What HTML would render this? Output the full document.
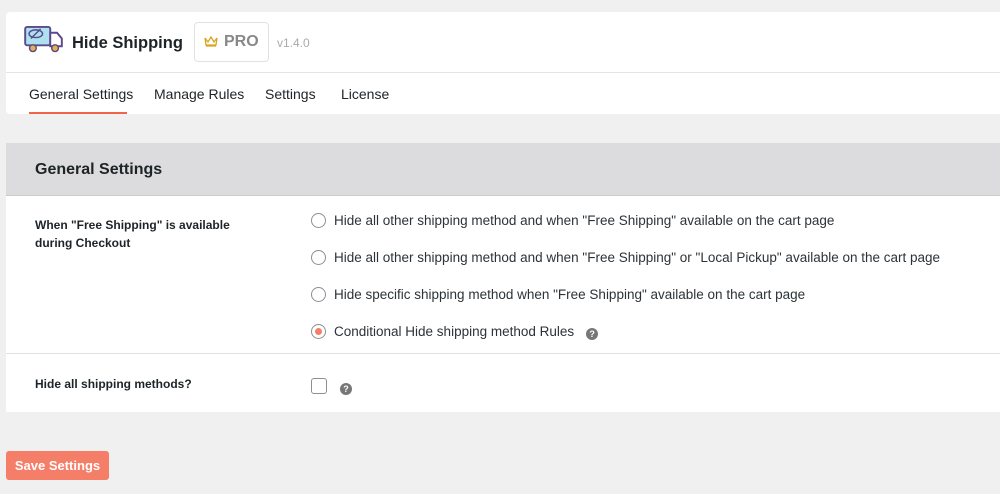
<!DOCTYPE html>
<html><head><style>
*{box-sizing:border-box;margin:0;padding:0}
body{width:1000px;height:494px;background:#f0f0f1;font-family:"Liberation Sans",sans-serif;color:#1d2327;position:relative;overflow:hidden}
.hdr{position:absolute;left:6px;top:12px;width:994px;height:102px;background:#fff;border-radius:4px 0 0 4px}
.top{height:61px;border-bottom:1px solid #e5e5e5;position:relative}
.title{position:absolute;left:66px;top:22px;font-size:16.5px;font-weight:bold;color:#1d2327}
.pro{position:absolute;left:188px;top:10px;width:75px;height:40px;border:1px solid #e2e2e2;border-radius:4px;font-size:16px;font-weight:bold;color:#888;line-height:38px;padding-left:29px}
.ver{position:absolute;left:271px;top:24px;font-size:12px;color:#aaa}
.tabs a{position:absolute;top:86px;font-size:14px;color:#1d2327;text-decoration:none}
.ul{position:absolute;left:29px;top:112px;width:98px;height:2px;background:#f0644a}
.card{position:absolute;left:6px;top:143px;width:994px;height:269px;background:#fff}
.ch{height:53px;background:#dcdcde;border-bottom:1px solid #ccc;padding:18px 29px;font-size:16px;font-weight:bold}
.lbl{position:absolute;left:35px;font-size:12px;font-weight:bold;line-height:18px}
.opt{position:absolute;left:311px;font-size:13.5px;color:#2c3338}
.r{display:inline-block;width:15px;height:15px;border:1px solid #8c8f94;border-radius:50%;vertical-align:-3px;margin-right:8px;position:relative;background:#fff}
.q{display:inline-block;width:12px;height:12px;border-radius:50%;background:#777;color:#fff;font-size:9px;font-weight:bold;text-align:center;line-height:12px;margin-left:12px;vertical-align:-1px}
.btn{position:absolute;left:6px;top:451px;width:103px;height:29px;background:#f57e68;border-radius:3px;color:#fff;font-size:13px;font-weight:bold;text-align:center;line-height:29px}
</style></head><body>
<div class="hdr">
<div class="top">
<svg style="position:absolute;left:18px;top:14px" width="39" height="27" viewBox="0 0 40 28"><rect x="1" y="1" width="26" height="19" rx="2" fill="#aee0f0" stroke="#5a4a8a" stroke-width="2"/><path d="M27 7h7l5 6v8H27z" fill="#fff" stroke="#5a4a8a" stroke-width="2"/><ellipse cx="12" cy="8" rx="7" ry="4" fill="none" stroke="#5a4a8a" stroke-width="1.5"/><line x1="7" y1="13" x2="17" y2="3" stroke="#5a4a8a" stroke-width="1.5"/><circle cx="9" cy="23" r="3.5" fill="#e8b04a" stroke="#5a4a8a" stroke-width="1.5"/><circle cx="32" cy="23" r="3.5" fill="#e8b04a" stroke="#5a4a8a" stroke-width="1.5"/></svg>
<div class="title">Hide Shipping</div>
<div class="pro"><svg style="position:absolute;left:9px;top:13px" width="14" height="11" viewBox="0 0 14 11"><path d="M1 2l3 4 3-5 3 5 3-4-1 7H2z M2 10h10" fill="none" stroke="#d9a520" stroke-width="1.3"/></svg>PRO</div>
<div class="ver">v1.4.0</div>
</div>
</div>
<div class="tabs"><a style="left:29px">General Settings</a><a style="left:154px">Manage Rules</a><a style="left:265px">Settings</a><a style="left:341px">License</a></div>
<div class="ul"></div>
<div class="card">
<div class="ch">General Settings</div>
<div style="position:absolute;left:0;top:210px;width:994px;height:1px;background:#e2e2e2"></div>
</div>
<div class="lbl" style="top:216px">When "Free Shipping" is available<br>during Checkout</div>
<div class="opt" style="top:213px"><span class="r"></span>Hide all other shipping method and when "Free Shipping" available on the cart page</div>
<div class="opt" style="top:250px"><span class="r"></span>Hide all other shipping method and when "Free Shipping" or "Local Pickup" available on the cart page</div>
<div class="opt" style="top:287px"><span class="r"></span>Hide specific shipping method when "Free Shipping" available on the cart page</div>
<div class="opt" style="top:324px"><span class="r"><span style="position:absolute;left:3px;top:3px;width:7px;height:7px;border-radius:50%;background:#f57e68"></span></span>Conditional Hide shipping method Rules<span class="q">?</span></div>
<div class="lbl" style="top:375px">Hide all shipping methods?</div>
<div class="opt" style="top:378px"><span style="display:inline-block;width:16px;height:16px;border:1px solid #8c8f94;border-radius:3px;vertical-align:-3px"></span><span class="q" style="margin-left:13px">?</span></div>
<div class="btn">Save Settings</div>
</body></html>
